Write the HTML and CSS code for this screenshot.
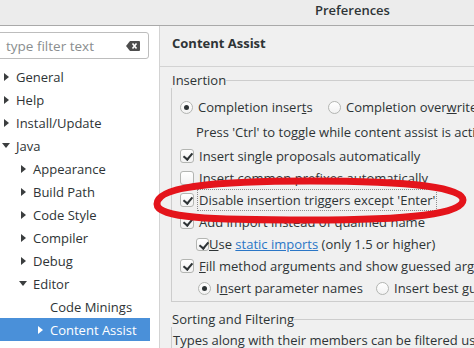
FILE: index.html
```html
<!DOCTYPE html>
<html lang="en">
<head>
  <meta charset="UTF-8" />
  <meta name="viewport" content="width=device-width, initial-scale=1.0"/>
  <title>Preferences</title>
  <link rel="stylesheet" href="styles.css">
</head>
<body>
  <div class="window">
    <div class="titlebar"><span class="title">Preferences</span></div>

    <div class="main">
      <div class="sidebar">
        <div class="filter">
          <span class="filter-text">type filter text</span>
          <svg class="filter-clear" width="14" height="10" viewBox="0 0 14 10">
            <path d="M4 0 H13 Q14 0 14 1 V9 Q14 10 13 10 H4 L0 5 Z" fill="#4d4d4d"/>
            <path d="M6.5 2.5 L10.5 7.5 M10.5 2.5 L6.5 7.5" stroke="#fff" stroke-width="1.6"/>
          </svg>
        </div>

        <ul class="tree">
          <li class="node lvl1 closed">General</li>
          <li class="node lvl1 closed">Help</li>
          <li class="node lvl1 closed">Install/Update</li>
          <li class="node lvl1 open">Java</li>
          <li class="node lvl2 closed">Appearance</li>
          <li class="node lvl2 closed">Build Path</li>
          <li class="node lvl2 closed">Code Style</li>
          <li class="node lvl2 closed">Compiler</li>
          <li class="node lvl2 closed">Debug</li>
          <li class="node lvl2 open">Editor</li>
          <li class="node lvl3 leaf">Code Minings</li>
          <li class="node lvl3 closed selected">Content Assist</li>
        </ul>
      </div>

      <div class="content">
        <div class="page-title">Content Assist</div>

        <div class="group">
          <div class="group-title"><span>Insertion</span></div>
          <div class="group-body">
            <div class="row row-radio">
              <label class="opt opt-first"><span class="radio on"></span>Completion inser<u>t</u>s</label>
              <label class="opt"><span class="radio"></span>Completion over<u>w</u>rite</label>
            </div>
            <div class="row row-note">Press 'Ctrl' to toggle while content assist is active</div>
            <div class="row"><span class="check on"></span>Insert single proposals automatically</div>
            <div class="row"><span class="check"></span>Insert common prefixes automatically</div>
            <div class="row"><span class="check on"></span><span class="focused">Disable insertion triggers except 'Enter'</span></div>
            <div class="row"><span class="check on"></span>Add import instead of qualified name</div>
            <div class="row row-sub"><span class="check small on"></span><u>U</u>se&nbsp;<a class="link" href="#">static imports</a>&nbsp;(only 1.5 or higher)</div>
            <div class="row"><span class="check on"></span><u>F</u>ill method arguments and show guessed arguments</div>
            <div class="row row-param">
              <label class="opt opt-param"><span class="radio on"></span>I<u>n</u>sert parameter names</label>
              <label class="opt"><span class="radio"></span>Insert best guessed arguments</label>
            </div>
          </div>
        </div>

        <div class="group group-sort">
          <div class="group-title"><span>Sorting and Filtering</span></div>
          <div class="group-body">
            <div class="row row-plain">Types along with their members can be filtered using type filters</div>
          </div>
        </div>
      </div>
    </div>

    <!-- hand drawn highlight -->
    <svg class="scribble" width="474" height="348" viewBox="0 0 474 348">
      <path d="M157 204 C157 188, 205 181, 310 181 C415 181, 463 188, 463 200 C463 214, 410 220, 310 220 C210 220, 157 218, 157 204 Z"
            fill="none" stroke="#e4141b" stroke-width="7"/>
    </svg>
  </div>
</body>
</html>
```

FILE: styles.css
```css
body {
  margin: 0;
  font-family: 'Open Sans', 'Noto Sans', sans-serif;
  font-size: 13px;
  color: #2e3436;
  background-color: #f0f0f0;
}

.window {
  position: relative;
  width: 474px;
  height: 348px;
  overflow: hidden;
}

.titlebar {
  height: 25px;
  background-color: #ececec;
  border-bottom: 1px solid #a9a9a9;
  padding-left: 315px;
  line-height: 20px;
  white-space: nowrap;
}

.title {
  font-weight: 600;
}

.main {
  display: flex;
  height: 322px;
}

.sidebar {
  width: 159px;
  flex: none;
  background-color: #ffffff;
}

.filter {
  display: flex;
  align-items: center;
  justify-content: space-between;
  box-sizing: border-box;
  height: 27px;
  width: 153px;
  margin: 6px 0 0 -4px;
  padding: 0 8px 0 9px;
  border: 1px solid #bdbdbd;
  border-radius: 3px;
  background: white;
}

.filter-text {
  color: #8a8e8f;
  font-size: 13.5px;
}

.tree {
  list-style: none;
  margin: 6px 0 0;
  padding: 0;
}

.node {
  display: flex;
  align-items: center;
  height: 23px;
  white-space: nowrap;
}

.node::before {
  content: '';
  width: 12px;
  flex: none;
}

.node.closed::before {
  width: 0;
  height: 0;
  border-left: 5px solid #3b3e3f;
  border-top: 4px solid transparent;
  border-bottom: 4px solid transparent;
  margin-right: 7px;
}

.node.open::before {
  width: 0;
  height: 0;
  border-top: 5px solid #3b3e3f;
  border-left: 4px solid transparent;
  border-right: 4px solid transparent;
  margin-left: -2px;
  margin-right: 6px;
}

.lvl1 { padding-left: 4px; }
.lvl2 { padding-left: 21px; }
.lvl3 { padding-left: 38px; }

.node.selected {
  background-color: #4a90d9;
  color: #ffffff;
  width: 150px;
  box-sizing: border-box;
}

.node.selected::before {
  border-left-color: #ffffff;
}

.content {
  flex: 1;
  min-width: 0;
  border-left: 1px solid #d3d3d3;
  white-space: nowrap;
}

.page-title {
  height: 40px;
  line-height: 34px;
  padding-left: 12px;
  font-weight: bold;
  border-bottom: 1px solid #d3d3d3;
}

.group {
  margin: 5px 0 0 11px;
}

.group-title {
  display: flex;
  align-items: center;
  height: 16px;
}

.group-title span {
  padding-left: 1px;
}

.group-title::after {
  content: '';
  flex: 1;
  border-top: 1px solid #cdcdcd;
}

.group-body {
  border-left: 1px solid #cdcdcd;
  border-bottom: 1px solid #cdcdcd;
  padding: 7px 0 2px 8px;
}

.row {
  display: flex;
  align-items: center;
  height: 22px;
}

.row-radio { height: 24px; }
.row-note { height: 26px; padding-left: 16px; }
.row-sub { padding-left: 16px; }
.row-param { padding-left: 18px; }

.opt {
  display: flex;
  align-items: center;
  flex: none;
}

.opt-first { width: 148px; }
.opt-param { width: 178px; }

.check,
.radio {
  flex: none;
  box-sizing: border-box;
  border: 1px solid #b3b5b2;
  background: linear-gradient(#ffffff, #f2f2f2);
  margin-right: 5px;
  position: relative;
}

.check {
  width: 14px;
  height: 14px;
  border-radius: 3px;
}

.check.small {
  width: 13px;
  height: 13px;
  margin-right: 0;
}

.check.on::after {
  content: '';
  position: absolute;
  left: 4px;
  top: 1px;
  width: 4px;
  height: 7px;
  border-right: 2px solid #2e3436;
  border-bottom: 2px solid #2e3436;
  transform: rotate(40deg);
}

.radio {
  width: 13px;
  height: 13px;
  border-radius: 50%;
}

.radio.on::after {
  content: '';
  position: absolute;
  left: 3px;
  top: 3px;
  width: 5px;
  height: 5px;
  border-radius: 50%;
  background: #2e3436;
}

.focused {
  outline: 1px dotted #8c8c8c;
  outline-offset: 1px;
}

.link {
  color: #2a76c6;
}

.group-sort {
  margin-top: 9px;
}

.group-sort .group-body {
  padding: 2px 0 0 0;
  border-bottom: none;
}

.row-plain {
  padding-left: 1px;
}

.scribble {
  position: absolute;
  left: 0;
  top: 0;
  pointer-events: none;
}
```
